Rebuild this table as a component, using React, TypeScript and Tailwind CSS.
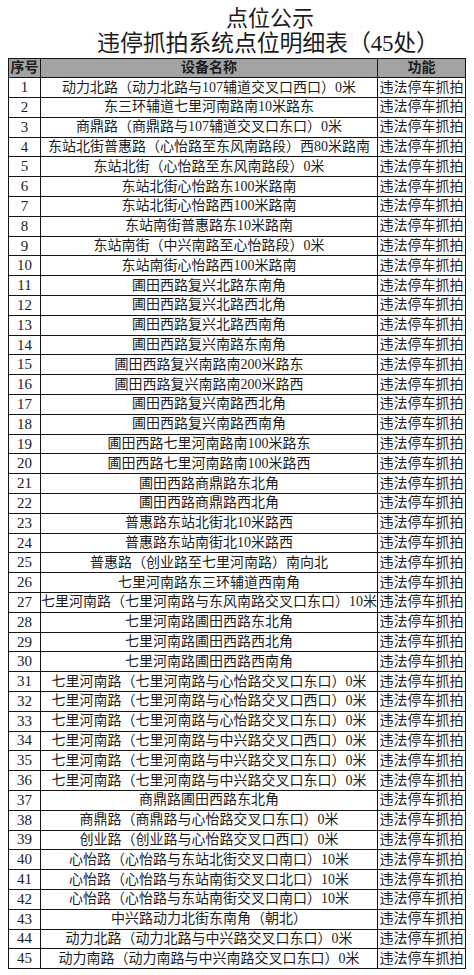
import React from "react";

const rows: string[] = [
  "动力北路（动力北路与107辅道交叉口西口）0米",
  "东三环辅道七里河南路南10米路东",
  "商鼎路（商鼎路与107辅道交叉口东口）0米",
  "东站北街普惠路（心怡路至东风南路段）西80米路南",
  "东站北街（心怡路至东风南路段）0米",
  "东站北街心怡路东100米路南",
  "东站北街心怡路西100米路南",
  "东站南街普惠路东10米路南",
  "东站南街（中兴南路至心怡路段）0米",
  "东站南街心怡路西100米路南",
  "圃田西路复兴北路东南角",
  "圃田西路复兴北路西北角",
  "圃田西路复兴北路西南角",
  "圃田西路复兴南路东南角",
  "圃田西路复兴南路南200米路东",
  "圃田西路复兴南路南200米路西",
  "圃田西路复兴南路西北角",
  "圃田西路复兴南路西南角",
  "圃田西路七里河南路南100米路东",
  "圃田西路七里河南路南100米路西",
  "圃田西路商鼎路东北角",
  "圃田西路商鼎路西北角",
  "普惠路东站北街北10米路西",
  "普惠路东站南街北10米路西",
  "普惠路（创业路至七里河南路）南向北",
  "七里河南路东三环辅道西南角",
  "七里河南路（七里河南路与东风南路交叉口东口）10米",
  "七里河南路圃田西路东北角",
  "七里河南路圃田西路西北角",
  "七里河南路圃田西路西南角",
  "七里河南路（七里河南路与心怡路交叉口东口）0米",
  "七里河南路（七里河南路与心怡路交叉口西口）0米",
  "七里河南路（七里河南路与心怡路交叉口东口）0米",
  "七里河南路（七里河南路与中兴路交叉口西口）0米",
  "七里河南路（七里河南路与中兴路交叉口东口）0米",
  "七里河南路（七里河南路与中兴路交叉口东口）0米",
  "商鼎路圃田西路东北角",
  "商鼎路（商鼎路与心怡路交叉口东口）0米",
  "创业路（创业路与心怡路交叉口西口）0米",
  "心怡路（心怡路与东站北街交叉口南口）10米",
  "心怡路（心怡路与东站南街交叉口北口）10米",
  "心怡路（心怡路与东站南街交叉口南口）10米",
  "中兴路动力北街东南角（朝北）",
  "动力北路（动力北路与中兴路交叉口东口）0米",
  "动力南路（动力南路与中兴南路交叉口东口）0米",
];

export default function App() {
  return (
    <div
      className="w-[474px] h-[975px] bg-white text-[#1c1c1c] overflow-hidden"
      style={{ fontFamily: '"Liberation Serif", "Noto Sans CJK SC", serif' }}
    >
      <div className="pt-[8px] flex flex-col">
        <div className="pl-[66px] text-center text-[22px] leading-[22px]">点位公示</div>
        <div className="pl-[62px] mt-[2px] text-center text-[23px] leading-[24px] tracking-[-0.2px]">
          违停抓拍系统点位明细表（45处）
        </div>
      </div>
      <div className="pl-[8px] mt-[1.5px]">
        <table className="table-fixed border-collapse w-[457px] text-[14px] leading-none">
          <colgroup>
            <col className="w-[32px]" />
            <col className="w-[337px]" />
            <col className="w-[88px]" />
          </colgroup>
          <thead>
            <tr className="h-[19.8px] bg-[#a3a3a3]">
              <th className="border-[1.5px] border-[#151515] p-0 font-bold text-center">序号</th>
              <th className="border-[1.5px] border-[#151515] p-0 font-bold text-center">设备名称</th>
              <th className="border-[1.5px] border-[#151515] p-0 font-bold text-center">功能</th>
            </tr>
          </thead>
          <tbody>
            {rows.map((r, i) => (
              <tr key={i} className="h-[19.8px]">
                <td className="border-[1.5px] border-[#151515] p-0 text-center text-[15px]">{i + 1}</td>
                <td className="border-[1.5px] border-[#151515] p-0 text-center whitespace-nowrap">{r}</td>
                <td className="border-[1.5px] border-[#151515] p-0 text-center whitespace-nowrap">违法停车抓拍</td>
              </tr>
            ))}
          </tbody>
        </table>
      </div>
    </div>
  );
}
